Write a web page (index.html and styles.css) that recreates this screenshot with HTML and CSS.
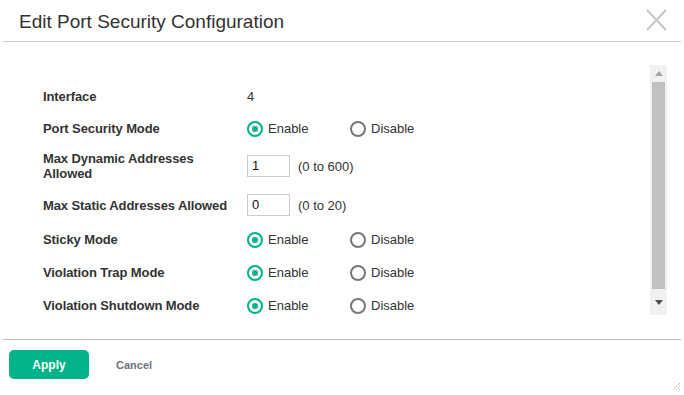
FILE: index.html
```html
<!DOCTYPE html>
<html>
<head>
<meta charset="utf-8">
<link rel="stylesheet" href="styles.css">
</head>
<body>
<div class="dialog">
  <div class="header">
    <div class="title">Edit Port Security Configuration</div>
    <svg class="close" width="23" height="22" viewBox="0 0 23 22"><path d="M2 1 L21 21 M21 1 L2 21" stroke="#c8c8c8" stroke-width="2.2" fill="none"/></svg>
  </div>
  <div class="body">
    <div class="content">
      <div class="label">Interface</div>
      <div class="value">4</div>

      <div class="label">Port Security Mode</div>
      <div class="value"><span class="opt"><span class="radio on"></span>Enable</span><span class="opt"><span class="radio"></span>Disable</span></div>

      <div class="label">Max Dynamic Addresses Allowed</div>
      <div class="value"><span class="input">1</span><span class="hint">(0 to 600)</span></div>

      <div class="label">Max Static Addresses Allowed</div>
      <div class="value"><span class="input">0</span><span class="hint">(0 to 20)</span></div>

      <div class="label">Sticky Mode</div>
      <div class="value"><span class="opt"><span class="radio on"></span>Enable</span><span class="opt"><span class="radio"></span>Disable</span></div>

      <div class="label">Violation Trap Mode</div>
      <div class="value"><span class="opt"><span class="radio on"></span>Enable</span><span class="opt"><span class="radio"></span>Disable</span></div>

      <div class="label">Violation Shutdown Mode</div>
      <div class="value"><span class="opt"><span class="radio on"></span>Enable</span><span class="opt"><span class="radio"></span>Disable</span></div>
    </div>
    <div class="scrollbar">
      <div class="arrow"><svg width="8" height="5" viewBox="0 0 8 5"><path d="M0 5 L4 0 L8 5 Z" fill="#a3a3a3"/></svg></div>
      <div class="thumb"></div>
      <div class="arrow"><svg width="8" height="5" viewBox="0 0 8 5"><path d="M0 0 L8 0 L4 5 Z" fill="#505050"/></svg></div>
    </div>
  </div>
  <div class="footer">
    <div class="btn-apply">Apply</div>
    <div class="btn-cancel">Cancel</div>
  </div>
  <svg class="grip" width="9" height="9" viewBox="0 0 9 9"><path d="M8 1 L1 8 M8 4 L4 8 M8 7 L7 8" stroke="#9a9a9a" stroke-width="1" stroke-dasharray="1 1" fill="none"/></svg>
</div>
</body>
</html>
```
FILE: styles.css
```css
html, body {
  margin: 0;
  padding: 0;
  background: #fff;
}
body {
  font-family: "Liberation Sans", Arial, sans-serif;
  color: #333;
}
.dialog {
  position: relative;
  width: 684px;
  height: 395px;
  display: flex;
  flex-direction: column;
  background: #fff;
}
.header {
  height: 41px;
  margin: 0 3px;
  padding: 0 13px 0 16px;
  border-bottom: 1px solid #cfcfcf;
  display: flex;
  align-items: center;
  justify-content: space-between;
}
.title {
  font-size: 19px;
  color: #333;
  padding-top: 3px;
}
.close {
  display: block;
  margin-top: -1px;
}
.body {
  height: 297px;
  padding: 23px 17px 0 43px;
  box-sizing: border-box;
  display: flex;
}
.content {
  flex: 1;
  height: 250px;
  overflow: hidden;
  display: grid;
  grid-template-columns: 204px 1fr;
  grid-template-rows: 32px 33px 42px 36px 33px 33px 33px;
  align-items: center;
  padding-top: 15px;
  box-sizing: border-box;
  align-content: start;
}
.label {
  font-size: 13px;
  font-weight: bold;
  line-height: 15px;
  color: #333;
  padding-right: 14px;
  letter-spacing: -0.1px;
}
.value {
  font-size: 13px;
  color: #333;
  display: flex;
  align-items: center;
}
.opt {
  display: inline-flex;
  align-items: center;
  width: 103px;
}
.radio {
  width: 16px;
  height: 16px;
  box-sizing: border-box;
  border: 2px solid #777;
  border-radius: 50%;
  margin-right: 5px;
  display: inline-flex;
  align-items: center;
  justify-content: center;
}
.radio.on {
  border-color: #00b388;
}
.radio.on::after {
  content: "";
  width: 6px;
  height: 6px;
  border-radius: 50%;
  background: #00b388;
}
.input {
  width: 43px;
  height: 22px;
  box-sizing: border-box;
  border: 1px solid #ccc;
  padding: 0 4px;
  line-height: 20px;
  font-size: 13px;
  color: #111;
}
.hint {
  margin-left: 8px;
}
.scrollbar {
  width: 17px;
  height: 250px;
  background: #f1f1f1;
  display: flex;
  flex-direction: column;
}
.arrow {
  height: 17px;
  display: flex;
  align-items: center;
  justify-content: center;
}
.arrow:last-child {
  height: 26px;
}
.thumb {
  flex: 1;
  background: #c1c1c1;
  margin: 0 2px;
}
.footer {
  margin: 0 3px;
  border-top: 1px solid #bcbcbc;
  padding: 10px 6px;
  display: flex;
  align-items: center;
}
.btn-apply {
  width: 80px;
  height: 29px;
  background: #00b388;
  border-radius: 5px;
  color: #fff;
  font-size: 12px;
  font-weight: bold;
  display: flex;
  align-items: center;
  justify-content: center;
}
.btn-cancel {
  margin-left: 27px;
  font-size: 11px;
  font-weight: bold;
  color: #707080;
}
.grip {
  position: absolute;
  right: 3px;
  bottom: 4px;
}
```
